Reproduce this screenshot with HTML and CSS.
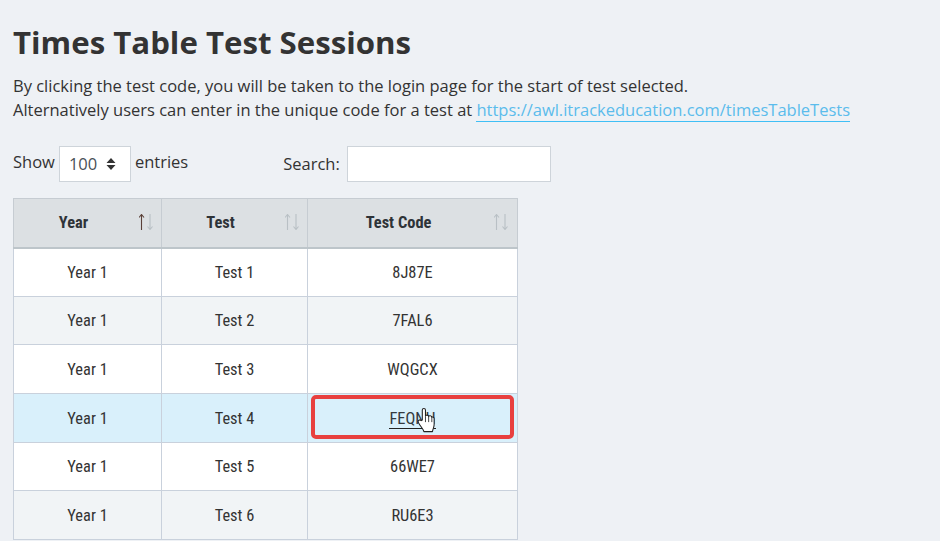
FILE: index.html
```html
<!DOCTYPE html>
<html lang="en">
<head>
    <meta charset="UTF-8">
    <meta name="viewport" content="width=device-width, initial-scale=1.0">
    <title>Times Table Test Sessions</title>
    <link rel="stylesheet" href="styles.css">
</head>
<body>
    <h1>Times Table Test Sessions</h1>
    <p class="intro">
        By clicking the test code, you will be taken to the login page for the start of test selected.<br>
        Alternatively users can enter in the unique code for a test at <a href="#">https://awl.itrackeducation.com/timesTableTests</a>
    </p>

    <div class="table-controls">
        <div class="length-control">
            <span>Show</span>
            <div class="fake-select">
                <span>100</span>
                <svg width="10" height="14" viewBox="0 0 10 14"><path d="M5 1 L9.5 6 H0.5 Z M5 13 L0.5 8 H9.5 Z" fill="#333"/></svg>
            </div>
            <span>entries</span>
        </div>
        <label class="search-control">
            <span class="search-label">Search:</span>
            <input type="text">
        </label>
    </div>

    <table class="sessions">
        <thead>
            <tr>
                <th class="col-year">Year
                    <svg class="sort-icon" width="14" height="16" viewBox="0 0 14 16"><path d="M2.5 16 V0.5 M0 3.5 L2.5 0.5 L5 3.5" fill="none" stroke="#5a4038" stroke-width="1.1"/><path d="M11 0 V15.5 M8.5 12.5 L11 15.5 L13.5 12.5" fill="none" stroke="#b9c0c5" stroke-width="1.1"/></svg>
                </th>
                <th class="col-test">Test
                    <svg class="sort-icon" width="14" height="16" viewBox="0 0 14 16"><path d="M2.5 16 V0.5 M0 3.5 L2.5 0.5 L5 3.5" fill="none" stroke="#b9c0c5" stroke-width="1.1"/><path d="M11 0 V15.5 M8.5 12.5 L11 15.5 L13.5 12.5" fill="none" stroke="#b9c0c5" stroke-width="1.1"/></svg>
                </th>
                <th class="col-code">Test Code
                    <svg class="sort-icon" width="14" height="16" viewBox="0 0 14 16"><path d="M2.5 16 V0.5 M0 3.5 L2.5 0.5 L5 3.5" fill="none" stroke="#b9c0c5" stroke-width="1.1"/><path d="M11 0 V15.5 M8.5 12.5 L11 15.5 L13.5 12.5" fill="none" stroke="#b9c0c5" stroke-width="1.1"/></svg>
                </th>
            </tr>
        </thead>
        <tbody>
            <tr><td>Year 1</td><td>Test 1</td><td>8J87E</td></tr>
            <tr class="stripe"><td>Year 1</td><td>Test 2</td><td>7FAL6</td></tr>
            <tr><td>Year 1</td><td>Test 3</td><td>WQGCX</td></tr>
            <tr class="hovered">
                <td>Year 1</td>
                <td>Test 4</td>
                <td class="marked">
                    <a href="#">FEQNH</a>
                    <span class="red-box"></span>
                    <svg class="hand" width="18" height="26" viewBox="0 0 17 24"><path d="M5 12 V2.5 C5 0.6 8 0.6 8 2.5 V8.5 C8 7 11 7 11 8.8 C11 7.6 14 7.8 14 9.6 C14 8.8 16.2 9 16.2 10.8 V16 C16.2 19 15 20 14.6 23 H6.5 C6 20.5 3.6 18.5 1.4 14.6 C0.2 12.4 2.8 11 4 12.6 Z" fill="#fff" stroke="#222" stroke-width="1" stroke-linejoin="round"/><path d="M8 9 V14 M11 9 V14 M14 10 V14" fill="none" stroke="#222" stroke-width="0.8"/></svg>
                </td>
            </tr>
            <tr><td>Year 1</td><td>Test 5</td><td>66WE7</td></tr>
            <tr class="stripe"><td>Year 1</td><td>Test 6</td><td>RU6E3</td></tr>
        </tbody>
    </table>
</body>
</html>
```

FILE: styles.css
```css
html, body {
    height: 100%;
}
body {
    margin: 0;
    padding: 23px 13px 0;
    box-sizing: border-box;
    background: #eef1f5;
    color: #333;
    font-family: "Open Sans", sans-serif;
    font-size: 16.5px;
    overflow: hidden;
}
h1 {
    margin: 0;
    font-size: 31.2px;
    line-height: 38px;
    font-weight: 700;
    color: #333;
}
.intro {
    margin: 13px 0 0;
    line-height: 24px;
}
.intro a {
    color: #5bbcec;
    text-decoration: none;
    border-bottom: 1px solid #3fbff5;
}
.table-controls {
    display: flex;
    margin-top: 24px;
    height: 36px;
}
.length-control {
    display: flex;
    align-items: flex-start;
    gap: 4px;
    line-height: 32px;
}
.fake-select {
    display: flex;
    align-items: center;
    justify-content: space-between;
    box-sizing: border-box;
    width: 72px;
    height: 36px;
    padding: 0 14px 0 9px;
    background: #fff;
    border: 1px solid #ced4da;
    color: #495057;
}
.search-control {
    display: flex;
    align-items: center;
    gap: 7px;
    margin-left: 95px;
}
.search-label {
    padding-bottom: 2px;
}
.search-control input {
    box-sizing: border-box;
    width: 204px;
    height: 36px;
    background: #fff;
    border: 1px solid #ced4da;
    padding: 0 10px;
}
.sessions {
    margin-top: 16px;
    border-collapse: collapse;
    table-layout: fixed;
    width: 505px;
    font-family: Roboto, sans-serif;
    font-stretch: 75%;
    font-size: 16.4px;
}
.sessions th, .sessions td {
    box-sizing: border-box;
    border: 1px solid #c9d1dc;
    text-align: center;
    padding: 0;
}
.sessions th {
    position: relative;
    height: 49px;
    padding-right: 28px;
    background: #dce0e3;
    border-color: #c6ccd2;
    border-bottom: 2px solid #bdc5ca;
    font-weight: 700;
    color: #2e3338;
}
.sessions td {
    height: 48.7px;
    background: #fff;
}
.sessions .stripe td {
    background: #f1f4f6;
}
.sessions .hovered td {
    background: #d9f0fb;
    padding-top: 1px;
}
.col-year { width: 148px; }
.col-test { width: 146px; }
.sort-icon {
    position: absolute;
    right: 8px;
    top: 15px;
}
.col-test .sort-icon { right: 8.5px; }
.col-code .sort-icon { right: 9.5px; }
.marked {
    position: relative;
}
.marked a {
    color: #343a40;
    text-decoration: none;
    border-bottom: 1px solid #222;
}
.red-box {
    position: absolute;
    left: 3px;
    right: 3px;
    top: 1px;
    bottom: 3px;
    border: 4px solid #e8403f;
    border-radius: 5px;
}
.hand {
    position: absolute;
    left: 109px;
    top: 13px;
}
```
